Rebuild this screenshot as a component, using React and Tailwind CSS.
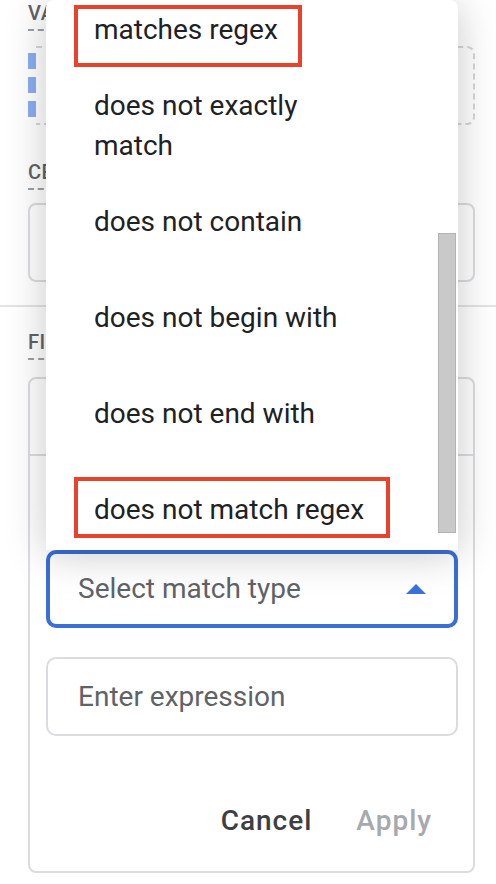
import React from 'react';

const options = [
  'matches regex',
  'does not exactly match',
  'does not contain',
  'does not begin with',
  'does not end with',
  'does not match regex',
];

function SectionLabel({ children }) {
  return (
    <div className="inline-block border-b-2 border-dashed border-[#9aa0a6] pb-[4px] text-[20px] leading-[24px] font-medium tracking-[0.5px] text-[#5f6368]">
      {children}
    </div>
  );
}

function MatchTypeMenu() {
  return (
    <div className="absolute left-[46px] top-0 w-[412px] h-[550px] bg-white rounded-t-lg overflow-hidden shadow-[0_4px_40px_rgba(0,0,0,0.22)] z-10">
      <div className="flex flex-col -mt-[18px]">
        {options.map((opt) => (
          <div key={opt} className="h-[96px] flex items-center pl-[48px] text-[28px] leading-[40px] text-[#202124]">
            <span className="max-w-[285px]">{opt}</span>
          </div>
        ))}
      </div>

      {/* scrollbar */}
      <div className="absolute right-[2px] top-[233px] w-[18px] h-[300px] bg-[#c9c9c9] border border-[#b3b3b3]" />

      {/* highlight boxes */}
      <div className="absolute left-[28px] top-[5px] w-[228px] h-[62px] border-4 border-[#e8412c]" />
      <div className="absolute left-[28px] top-[477px] w-[316px] h-[61px] border-4 border-[#e8412c]" />
    </div>
  );
}

export default function App() {
  return (
    <div
      className="relative w-[496px] h-[884px] overflow-hidden bg-white"
      style={{ fontFamily: 'Roboto, "Liberation Sans", sans-serif' }}
    >
      <div className="pl-[28px] pr-[21px] pt-[1px]">
        <SectionLabel>VALUES</SectionLabel>
        <div className="mt-[15px] h-[79px] flex">
          <div className="w-[8px] flex flex-col gap-[8px] pt-[7px]">
            <div className="h-[16px] bg-[#8aaef0]" />
            <div className="h-[16px] bg-[#8aaef0]" />
            <div className="h-[16px] bg-[#8aaef0]" />
          </div>
          <div className="flex-1 border-2 border-l-0 border-dashed border-[#d4d6d9] rounded-r-lg" />
        </div>

        <div className="mt-[35px]">
          <SectionLabel>CELL TYPE</SectionLabel>
        </div>
        <div className="mt-[13px] h-[79px] border-2 border-[#dadce0] rounded-lg" />
      </div>

      <div className="mt-[23px] h-[2px] bg-[#e3e3e3]" />

      <div className="pl-[28px] pr-[21px]">
        <div className="mt-[23px]">
          <SectionLabel>FILTERS</SectionLabel>
        </div>
        <div className="mt-[17px] h-[496px] border-2 border-[#dadce0] rounded-lg flex flex-col">
          <div className="h-[77px] border-b-2 border-[#dadce0]" />
          <div className="pl-4 pr-[15px] pt-[94px] flex flex-col">
            <div className="h-[78px] border-4 border-[#3a6fd8] rounded-[10px] flex items-center justify-between pl-[28px] pr-[28px]">
              <span className="text-[28px] text-[#5f6368]">Select match type</span>
              <svg width="20" height="10" viewBox="0 0 20 10">
                <path d="M0 10 L10 0 L20 10 Z" fill="#3b72d9" />
              </svg>
            </div>
            <div className="mt-[29px] h-[79px] border-2 border-[#dadce0] rounded-[10px] flex items-center pl-[30px]">
              <span className="text-[28px] text-[#5f6368]">Enter expression</span>
            </div>
            <div className="mt-[64px] flex justify-end items-center gap-[44px] pr-[26px] text-[28px] tracking-[1px] font-medium">
              <span className="text-[#3c4043]">Cancel</span>
              <span className="text-[#a6a9ad]">Apply</span>
            </div>
          </div>
        </div>
      </div>

      <MatchTypeMenu />
    </div>
  );
}
